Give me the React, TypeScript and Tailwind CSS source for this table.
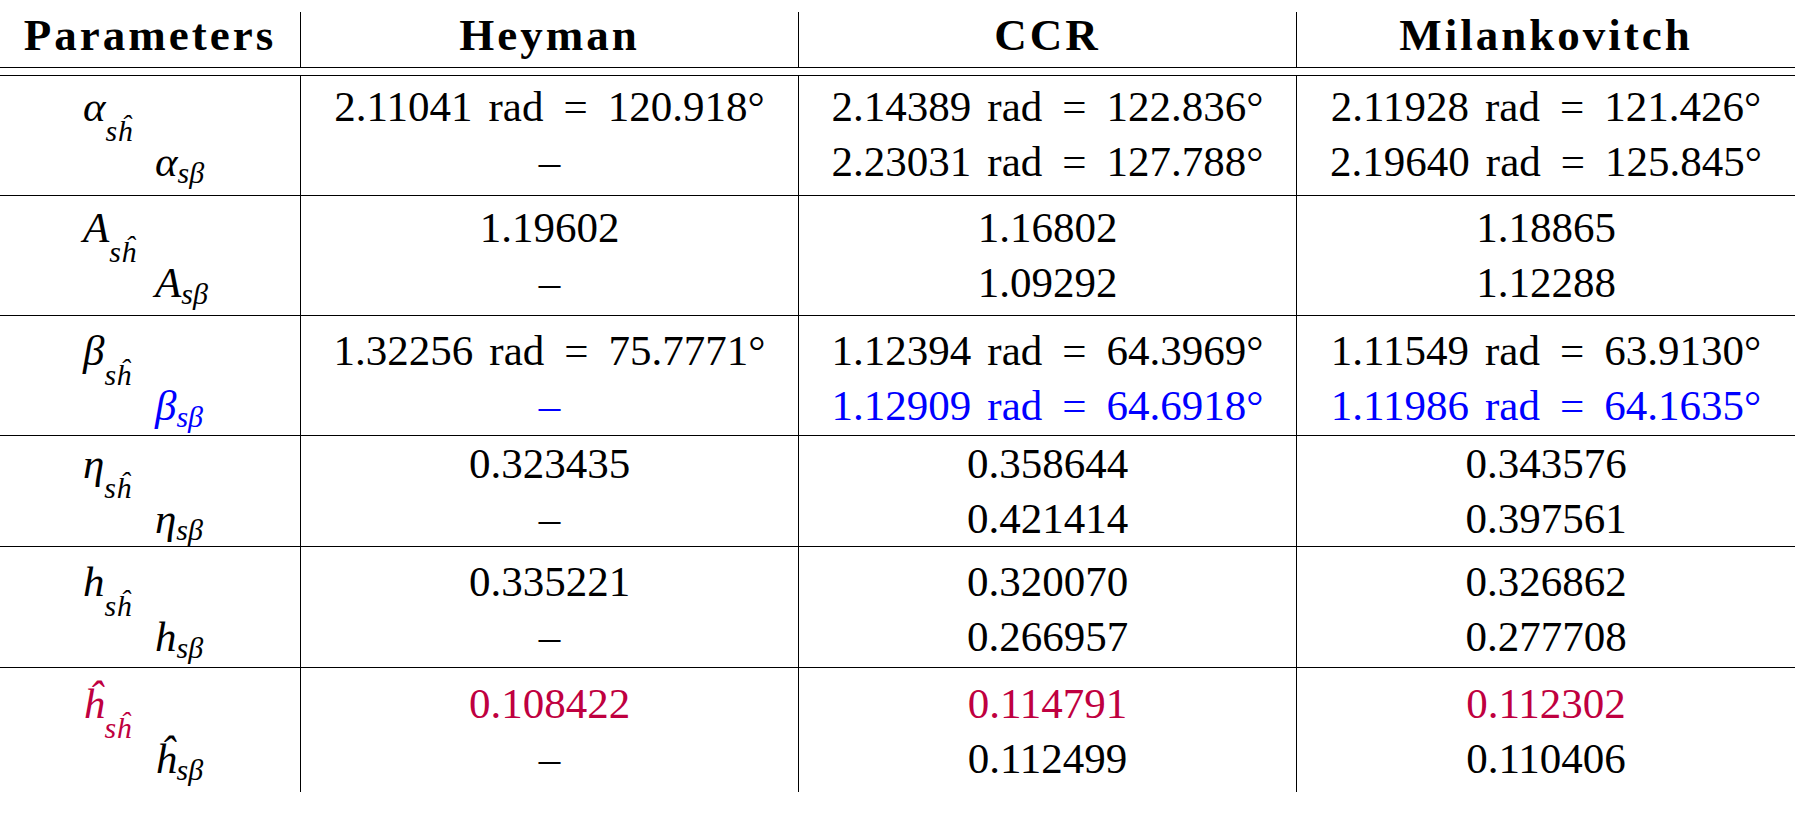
import React from "react";

type Cell = { text: string; color?: string };
type Group = {
  sym: string;
  symColor?: string;
  sym2Color?: string;
  h: string;
  pt: string;
  cols: [Cell, Cell][];
};

const F = "font-['Liberation_Serif']";
const BLUE = "text-[#0000ff]";
const PURPLE = "text-[#bf0040]";

const groups: Group[] = [
  {
    sym: "α",
    h: "h-[120px]",
    pt: "pt-[3px]",
    cols: [
      [{ text: "2.11041|120.918°" }, { text: "–" }],
      [{ text: "2.14389|122.836°" }, { text: "2.23031|127.788°" }],
      [{ text: "2.11928|121.426°" }, { text: "2.19640|125.845°" }],
    ],
  },
  {
    sym: "A",
    h: "h-[120px]",
    pt: "pt-[4px]",
    cols: [
      [{ text: "1.19602" }, { text: "–" }],
      [{ text: "1.16802" }, { text: "1.09292" }],
      [{ text: "1.18865" }, { text: "1.12288" }],
    ],
  },
  {
    sym: "β",
    sym2Color: BLUE,
    h: "h-[120px]",
    pt: "pt-[7px]",
    cols: [
      [{ text: "1.32256|75.7771°" }, { text: "–", color: BLUE }],
      [{ text: "1.12394|64.3969°" }, { text: "1.12909|64.6918°", color: BLUE }],
      [{ text: "1.11549|63.9130°" }, { text: "1.11986|64.1635°", color: BLUE }],
    ],
  },
  {
    sym: "η",
    h: "h-[111px]",
    pt: "pt-[0px]",
    cols: [
      [{ text: "0.323435" }, { text: "–" }],
      [{ text: "0.358644" }, { text: "0.421414" }],
      [{ text: "0.343576" }, { text: "0.397561" }],
    ],
  },
  {
    sym: "h",
    h: "h-[121px]",
    pt: "pt-[7px]",
    cols: [
      [{ text: "0.335221" }, { text: "–" }],
      [{ text: "0.320070" }, { text: "0.266957" }],
      [{ text: "0.326862" }, { text: "0.277708" }],
    ],
  },
  {
    sym: "ĥ",
    symColor: PURPLE,
    h: "h-[125px]",
    pt: "pt-[8px]",
    cols: [
      [{ text: "0.108422", color: PURPLE }, { text: "–" }],
      [{ text: "0.114791", color: PURPLE }, { text: "0.112499" }],
      [{ text: "0.112302", color: PURPLE }, { text: "0.110406" }],
    ],
  },
];

function Value({ cell }: { cell: Cell }) {
  const parts = cell.text.split("|");
  return (
    <div className={`${F} h-[55px] leading-[55px] whitespace-nowrap text-center ${cell.color ?? ""}`}>
      {parts.length === 2 ? (
        <>
          <span className={F}>{parts[0]}</span>
          <span className={`${F} ml-[16px]`}>rad</span>
          <span className={`${F} mx-[20px]`}>=</span>
          <span className={F}>{parts[1]}</span>
        </>
      ) : (
        <span className={F}>{parts[0]}</span>
      )}
    </div>
  );
}

function Head({ label, last }: { label: string; last?: boolean }) {
  return (
    <div className={`${F} ${last ? "" : "border-r border-black"} flex items-start justify-center leading-[47px]`}>
      <span className={`${F} font-bold`}>{label}</span>
    </div>
  );
}

export default function App() {
  return (
    <div className="font-['Liberation_Serif'] min-h-screen w-full bg-white text-black pt-[12px]">
      <div className={`${F} w-full text-[43px]`}>
        <div className="grid grid-cols-[301px_498px_498px_1fr] h-[55px] text-[45px] font-bold tracking-[3px]">
          <Head label="Parameters" />
          <Head label="Heyman" />
          <Head label="CCR" />
          <Head label="Milankovitch" last />
        </div>
        <div className="h-px bg-black" />
        <div className="h-[7px]" />
        {groups.map((g, gi) => (
          <div key={gi} className={`grid grid-cols-[301px_498px_498px_1fr] border-t border-black ${g.h}`}>
            <div className={`border-r border-black ${g.pt}`}>
              <div className={`${F} h-[55px] leading-[55px] whitespace-nowrap pl-[83px] ${g.symColor ?? ""}`}>
                <span className={`${F} italic`}>{g.sym}</span>
                <span className={`${F} relative top-[20px] text-[30px] italic`}>sĥ</span>
              </div>
              <div className={`${F} h-[55px] leading-[55px] whitespace-nowrap pl-[155px] ${g.sym2Color ?? ""}`}>
                <span className={`${F} italic`}>{g.sym}</span>
                <span className={`${F} relative top-[7px] text-[30px] italic`}>sβ</span>
              </div>
            </div>
            {g.cols.map((c, ci) => (
              <div key={ci} className={`${ci < 2 ? "border-r border-black" : ""} ${g.pt}`}>
                <Value cell={c[0]} />
                <Value cell={c[1]} />
              </div>
            ))}
          </div>
        ))}
      </div>
    </div>
  );
}
